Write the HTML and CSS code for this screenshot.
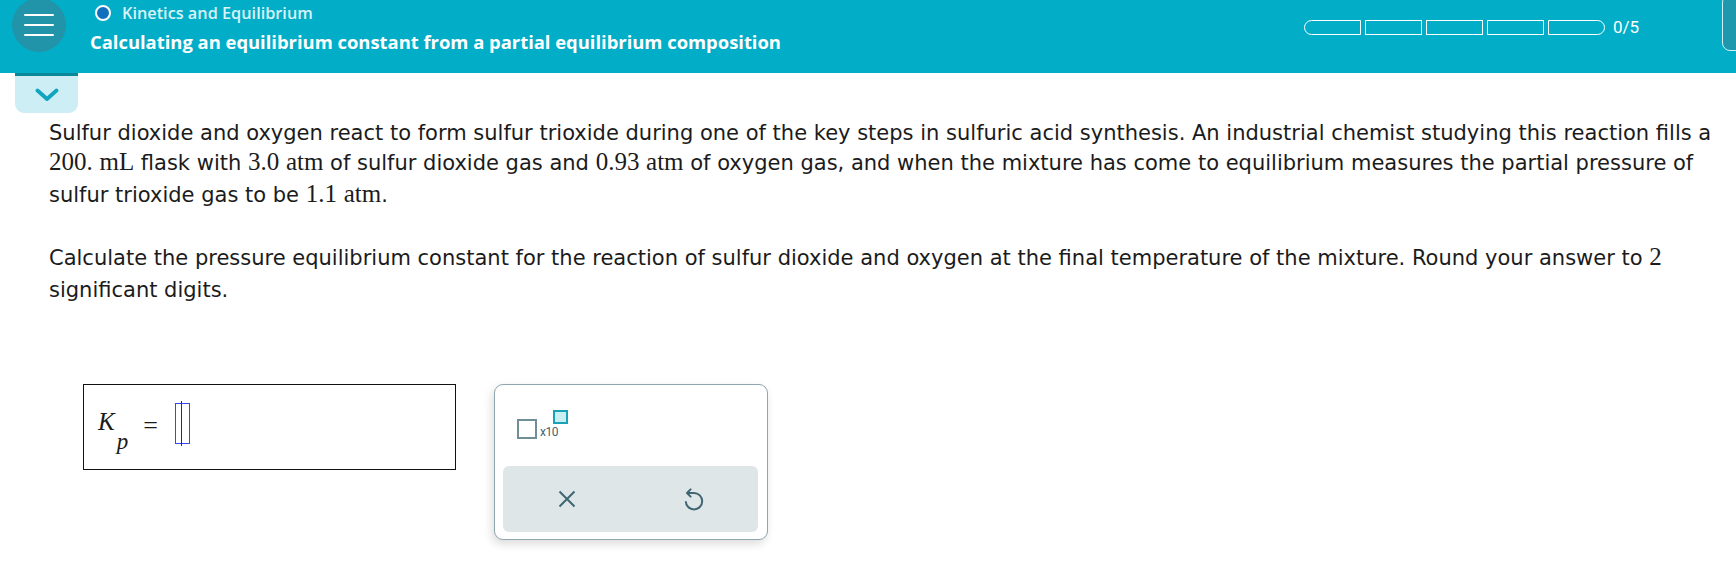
FILE: index.html
```html
<!DOCTYPE html>
<html lang="en">
<head>
    <meta charset="UTF-8">
    <meta name="viewport" content="width=device-width, initial-scale=1.0">
    <title>Calculating an equilibrium constant</title>
    <link rel="stylesheet" href="styles.css">
</head>
<body>

    <header class="topbar">
        <button class="menu-btn" aria-label="Menu">
            <span></span><span></span><span></span>
        </button>

        <div class="topic">
            <div class="topic-line"><span class="topic-dot"></span>Kinetics and Equilibrium</div>
            <h1 class="topic-title">Calculating an equilibrium constant from a partial equilibrium composition</h1>
        </div>

        <div class="progress">
            <div class="progress-bar">
                <span class="seg"></span>
                <span class="seg"></span>
                <span class="seg"></span>
                <span class="seg"></span>
                <span class="seg"></span>
            </div>
            <span class="progress-count">0/5</span>
        </div>

        <div class="side-btn"></div>

        <div class="drop-tab">
            <svg width="24" height="14" viewBox="0 0 24 14">
                <polyline points="2.5,2.5 12,11 21.5,2.5" fill="none" stroke="#10a6c0" stroke-width="3.8" stroke-linecap="round" stroke-linejoin="round"/>
            </svg>
        </div>
    </header>

    <main class="question">
        <p>
            Sulfur dioxide and oxygen react to form sulfur trioxide during one of the key steps in sulfuric acid synthesis. An industrial chemist studying this reaction fills a
            <span class="m">200.</span> <span class="m">mL</span> flask with <span class="m">3.0</span> <span class="m">atm</span> of sulfur dioxide gas and <span class="m">0.93</span> <span class="m">atm</span> of oxygen gas, and when the mixture has come to equilibrium measures the partial pressure of
            sulfur trioxide gas to be <span class="m">1.1</span> <span class="m">atm</span>.
        </p>
        <p class="task">
            Calculate the pressure equilibrium constant for the reaction of sulfur dioxide and oxygen at the final temperature of the mixture. Round your answer to <span class="m">2</span> significant digits.
        </p>

        <div class="answer-row">
            <div class="answer-box">
                <span class="kp"><i class="k">K</i><i class="sub">p</i></span>
                <span class="eq">=</span>
                <span class="cursor"></span>
            </div>

            <div class="keypad">
                <div class="keypad-top">
                    <button class="sci-btn">
                        <span class="sci-base"></span><span class="sci-x">x10</span><span class="sci-exp"></span>
                    </button>
                </div>
                <div class="keypad-actions">
                    <button class="act-btn" aria-label="Clear">
                        <svg width="20" height="20" viewBox="0 0 20 20">
                            <path d="M2.5 2.5 L17.5 17.5 M17.5 2.5 L2.5 17.5" stroke="#3f6672" stroke-width="2" fill="none"/>
                        </svg>
                    </button>
                    <button class="act-btn" aria-label="Undo">
                        <svg width="24" height="24" viewBox="0 0 24 24">
                            <path d="M5 6 H12 A8.2 8.2 0 1 1 3.8 14.2" stroke="#3f6672" stroke-width="2" fill="none"/>
                            <path d="M8.6 2.4 L5 6 L8.6 9.6" stroke="#3f6672" stroke-width="2" fill="none" stroke-linecap="round" stroke-linejoin="round"/>
                        </svg>
                    </button>
                </div>
            </div>
        </div>
    </main>

</body>
</html>
```

FILE: styles.css
```css
body {
    margin: 0;
    padding: 0;
    background-color: #fff;
    font-family: 'DejaVu Sans', Verdana, sans-serif;
    color: #1b1b1b;
}

button {
    font-family: inherit;
    border: none;
    background: none;
    padding: 0;
    cursor: pointer;
}

/* top bar */

.topbar {
    position: relative;
    display: flex;
    align-items: flex-start;
    height: 73px;
    padding-left: 12px;
    background-color: #02adc8;
    font-family: 'Open Sans', Roboto, sans-serif;
    color: #fff;
}

.menu-btn {
    display: flex;
    flex-direction: column;
    justify-content: center;
    gap: 8px;
    width: 54px;
    height: 54px;
    margin-top: -2px;
    padding: 0 12px;
    border-radius: 50%;
    background-color: #2294a9;
}

.menu-btn span {
    display: block;
    height: 2px;
    background-color: #fff;
    border-radius: 1px;
}

.topic {
    margin-left: 24px;
}

.topic-line {
    display: flex;
    align-items: center;
    height: 26px;
    padding-left: 5px;
    font-size: 16.3px;
    font-weight: 600;
    color: #d9f3f7;
}

.topic-dot {
    width: 12px;
    height: 12px;
    margin-right: 11px;
    border: 2px solid #fff;
    border-radius: 50%;
    background-color: #1170bd;
}

.topic-title {
    margin: 0;
    font-size: 18.4px;
    font-weight: 700;
    line-height: 32px;
}

.progress {
    display: flex;
    align-items: center;
    margin-left: auto;
    margin-top: 17px;
}

.progress-bar {
    display: flex;
    gap: 4px;
}

.seg {
    width: 55px;
    height: 13px;
    border: 1px solid #fff;
}

.seg:first-child {
    border-radius: 8px 0 0 8px;
}

.seg:last-child {
    border-radius: 0 8px 8px 0;
}

.progress-count {
    margin-left: 8px;
    font-family: Roboto, sans-serif;
    font-size: 17px;
    line-height: 20px;
}

.side-btn {
    width: 40px;
    height: 55px;
    margin-top: -6px;
    margin-left: 83px;
    margin-right: -28px;
    border: 1.5px solid #d3f0f5;
    border-radius: 8px;
    background-color: #1f97ac;
}

.drop-tab {
    position: absolute;
    left: 15px;
    top: 73px;
    display: flex;
    align-items: center;
    justify-content: center;
    width: 63px;
    height: 37px;
    border-top: 3px solid #0b8799;
    border-radius: 0 0 9px 9px;
    background-color: #cdeef4;
}

/* question */

.question {
    padding: 45px 4px 20px 49px;
}

.question p {
    margin: 0;
    font-size: 21px;
    line-height: 30px;
}

.question .task {
    margin-top: 31px;
}

.m {
    display: inline-block;
    padding-bottom: 7px;
    font-family: 'Liberation Serif', serif;
    font-size: 25px;
    line-height: 22px;
}

.answer-row {
    display: flex;
    align-items: flex-start;
    gap: 38px;
    margin-top: 79px;
    margin-left: 34px;
}

.answer-box {
    display: flex;
    align-items: center;
    box-sizing: border-box;
    width: 373px;
    height: 86px;
    padding-left: 14px;
    padding-bottom: 10px;
    border: 1px solid #111;
    font-family: 'Liberation Serif', serif;
}

.kp {
    position: relative;
    font-size: 25px;
    line-height: 28px;
}

.kp .sub {
    position: relative;
    top: 19px;
    margin-left: 2px;
    font-size: 23px;
}

.eq {
    position: relative;
    top: 4px;
    margin-left: 15px;
    font-size: 26px;
    line-height: 28px;
}

.cursor {
    position: relative;
    box-sizing: border-box;
    width: 15px;
    height: 41px;
    margin-left: 17px;
    margin-top: 2px;
    border: 1.5px solid #3b45f5;
}

.cursor::before {
    content: "";
    position: absolute;
    left: 5px;
    top: -3px;
    bottom: -3px;
    width: 1.5px;
    background-color: #333;
}

/* keypad */

.keypad {
    box-sizing: border-box;
    width: 274px;
    height: 156px;
    padding: 0 9px 8px 8px;
    border: 1px solid #8ea6ae;
    border-radius: 9px;
    background-color: #fff;
    box-shadow: -2px 4px 10px rgba(0, 0, 0, 0.14);
}

.keypad-top {
    box-sizing: border-box;
    height: 81px;
    padding: 24px 0 0 14px;
}

.sci-btn {
    position: relative;
    display: flex;
    align-items: flex-end;
    height: 30px;
}

.sci-base {
    box-sizing: border-box;
    width: 20px;
    height: 20px;
    border: 2px solid #6f8e98;
}

.sci-x {
    margin-left: 3px;
    font-family: Roboto, 'Liberation Sans', sans-serif;
    font-size: 12px;
    line-height: 14px;
    color: #3e6470;
    letter-spacing: -0.5px;
}

.sci-exp {
    position: absolute;
    left: 36px;
    top: 1px;
    box-sizing: border-box;
    width: 15px;
    height: 14px;
    border: 2px solid #17a2b8;
    background-color: #c9eef4;
}

.keypad-actions {
    display: flex;
    height: 66px;
    border-radius: 6px;
    background-color: #dfe6e8;
}

.act-btn {
    flex: 1;
    display: flex;
    align-items: center;
    justify-content: center;
}
```
